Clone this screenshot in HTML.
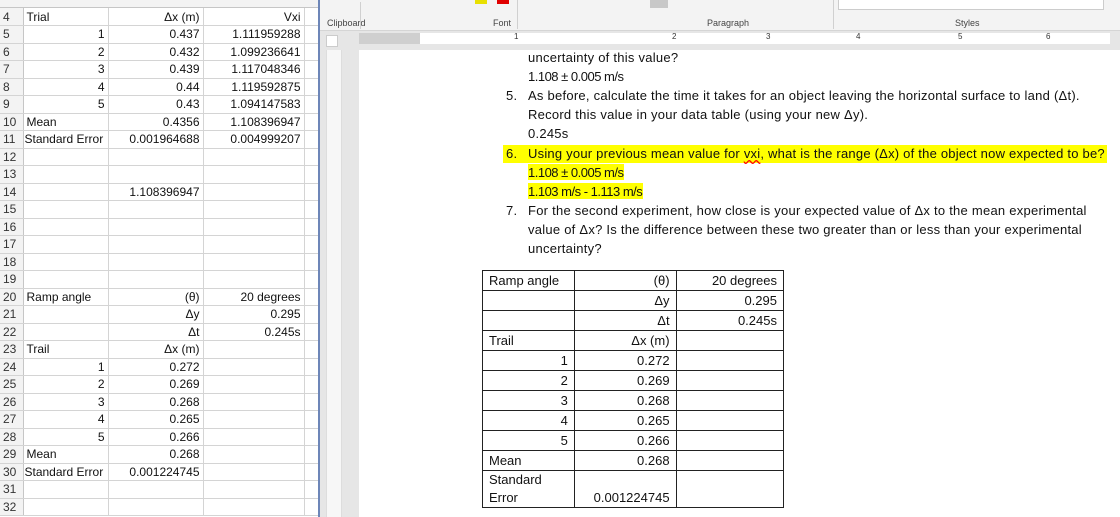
<!DOCTYPE html>
<html><head><meta charset="utf-8"><style>
*{margin:0;padding:0;box-sizing:border-box}
body{width:1120px;height:517px;overflow:hidden;background:#fff;font-family:"Liberation Sans",sans-serif;color:#111;position:relative}
.a{position:absolute;white-space:nowrap}
.xs td{border-right:1px solid #d4d4d4;border-bottom:1px solid #d4d4d4;height:17.5px;font-size:12px;padding:0 3px;line-height:16px;overflow:hidden;white-space:nowrap}
.xs td.h{background:#f3f3f3;color:#333;text-align:left;padding-left:3px;border-right:1px solid #c6c6c6}
.r{text-align:right}
.w{font-size:13px;line-height:19px;letter-spacing:0.25px}
.n{letter-spacing:-0.5px}
.hl{background:#ffff00;padding:1px 1px 0 0}
.t{border-collapse:collapse;font-size:13px}
.t td{border:1px solid #222;height:20px;padding:0 6px;line-height:18px}
</style></head><body>
<div class="a" style="left:0;top:0;width:318px;height:8px;background:#f3f3f3;border-bottom:1px solid #c6c6c6"></div>
<table class="xs a" style="left:0;top:8px;border-collapse:collapse;table-layout:fixed;width:318px">
<colgroup><col style="width:23px"><col style="width:85px"><col style="width:95px"><col style="width:101px"><col style="width:14px"></colgroup>
<tr><td class="h">4</td><td>Trial</td><td class="r">Δx (m)</td><td class="r">Vxi</td><td></td></tr>
<tr><td class="h">5</td><td class="r">1</td><td class="r">0.437</td><td class="r">1.111959288</td><td></td></tr>
<tr><td class="h">6</td><td class="r">2</td><td class="r">0.432</td><td class="r">1.099236641</td><td></td></tr>
<tr><td class="h">7</td><td class="r">3</td><td class="r">0.439</td><td class="r">1.117048346</td><td></td></tr>
<tr><td class="h">8</td><td class="r">4</td><td class="r">0.44</td><td class="r">1.119592875</td><td></td></tr>
<tr><td class="h">9</td><td class="r">5</td><td class="r">0.43</td><td class="r">1.094147583</td><td></td></tr>
<tr><td class="h">10</td><td>Mean</td><td class="r">0.4356</td><td class="r">1.108396947</td><td></td></tr>
<tr><td class="h">11</td><td style="padding:0 1px">Standard Error</td><td class="r">0.001964688</td><td class="r">0.004999207</td><td></td></tr>
<tr><td class="h">12</td><td></td><td></td><td></td><td></td></tr>
<tr><td class="h">13</td><td></td><td></td><td></td><td></td></tr>
<tr><td class="h">14</td><td></td><td class="r">1.108396947</td><td></td><td></td></tr>
<tr><td class="h">15</td><td></td><td></td><td></td><td></td></tr>
<tr><td class="h">16</td><td></td><td></td><td></td><td></td></tr>
<tr><td class="h">17</td><td></td><td></td><td></td><td></td></tr>
<tr><td class="h">18</td><td></td><td></td><td></td><td></td></tr>
<tr><td class="h">19</td><td></td><td></td><td></td><td></td></tr>
<tr><td class="h">20</td><td>Ramp angle</td><td class="r">(θ)</td><td class="r">20 degrees</td><td></td></tr>
<tr><td class="h">21</td><td></td><td class="r">Δy</td><td class="r">0.295</td><td></td></tr>
<tr><td class="h">22</td><td></td><td class="r">Δt</td><td class="r">0.245s</td><td></td></tr>
<tr><td class="h">23</td><td>Trail</td><td class="r">Δx (m)</td><td></td><td></td></tr>
<tr><td class="h">24</td><td class="r">1</td><td class="r">0.272</td><td></td><td></td></tr>
<tr><td class="h">25</td><td class="r">2</td><td class="r">0.269</td><td></td><td></td></tr>
<tr><td class="h">26</td><td class="r">3</td><td class="r">0.268</td><td></td><td></td></tr>
<tr><td class="h">27</td><td class="r">4</td><td class="r">0.265</td><td></td><td></td></tr>
<tr><td class="h">28</td><td class="r">5</td><td class="r">0.266</td><td></td><td></td></tr>
<tr><td class="h">29</td><td>Mean</td><td class="r">0.268</td><td></td><td></td></tr>
<tr><td class="h">30</td><td style="padding:0 1px">Standard Error</td><td class="r">0.001224745</td><td></td><td></td></tr>
<tr><td class="h">31</td><td></td><td></td><td></td><td></td></tr>
<tr><td class="h">32</td><td></td><td></td><td></td><td></td></tr>
</table>
<div class="a" style="left:318px;top:0;width:2px;height:517px;background:#6d86b8"></div>
<!-- word -->
<div class="a" style="left:320px;top:0;width:800px;height:517px;background:#e6e6e6"></div>
<div class="a" style="left:320px;top:0;width:800px;height:31px;background:#f3f3f3;border-bottom:1px solid #d5d5d5"></div>
<div class="a" style="left:327px;top:18px;font-size:9px;color:#444">Clipboard</div>
<div class="a" style="left:493px;top:18px;font-size:9px;color:#444">Font</div>
<div class="a" style="left:707px;top:18px;font-size:9px;color:#444">Paragraph</div>
<div class="a" style="left:955px;top:18px;font-size:9px;color:#444">Styles</div>
<div class="a" style="left:360px;top:2px;width:1px;height:27px;background:#d0d0d0"></div>
<div class="a" style="left:517px;top:0;width:1px;height:29px;background:#d0d0d0"></div>
<div class="a" style="left:833px;top:0;width:1px;height:29px;background:#d0d0d0"></div>
<div class="a" style="left:650px;top:0;width:18px;height:8px;background:#c8c8c8"></div>
<div class="a" style="left:475px;top:0;width:12px;height:4px;background:#e8e000"></div>
<div class="a" style="left:497px;top:0;width:12px;height:4px;background:#e00000"></div>
<div class="a" style="left:838px;top:0;width:266px;height:10px;background:#fff;border:1px solid #ccc;border-top:none"></div>
<!-- ruler -->
<div class="a" style="left:326px;top:35px;width:12px;height:12px;background:#fff;border:1px solid #ccc"></div>
<div class="a" style="left:359px;top:33px;width:61px;height:11px;background:#cfcfcf"></div>
<div class="a" style="left:420px;top:33px;width:690px;height:11px;background:#fff"></div>
<div class="a" style="left:514px;top:32px;font-size:8px;color:#333">1</div>
<div class="a" style="left:672px;top:32px;font-size:8px;color:#333">2</div>
<div class="a" style="left:766px;top:32px;font-size:8px;color:#333">3</div>
<div class="a" style="left:856px;top:32px;font-size:8px;color:#333">4</div>
<div class="a" style="left:958px;top:32px;font-size:8px;color:#333">5</div>
<div class="a" style="left:1046px;top:32px;font-size:8px;color:#333">6</div>
<div class="a" style="left:326px;top:50px;width:16px;height:467px;background:#f7f7f7;border-left:1px solid #ddd;border-right:1px solid #ddd"></div>
<div class="a" style="left:359px;top:50px;width:761px;height:467px;background:#fff"></div>
<!-- text -->
<div class="a w" style="left:528px;top:48px">uncertainty of this value?</div>
<div class="a w n" style="left:528px;top:67px">1.108 ± 0.005 m/s</div>
<div class="a w" style="left:506px;top:86px">5.</div>
<div class="a w" style="left:528px;top:86px">As before, calculate the time it takes for an object leaving the horizontal surface to land (Δt).</div>
<div class="a w" style="left:528px;top:105px">Record this value in your data table (using your new Δy).</div>
<div class="a w" style="left:528px;top:124px">0.245s</div>
<div class="a" style="left:503px;top:145px;width:604px;height:18px;background:#ffff00"></div>
<div class="a w" style="left:506px;top:144px">6.</div>
<div class="a w" style="left:528px;top:144px;letter-spacing:0.22px">Using your previous mean value for <span style="text-decoration:underline wavy red">vxi</span>, what is the range (Δx) of the object now expected to be?</div>
<div class="a w n" style="left:528px;top:163px"><span class="hl">1.108 ± 0.005 m/s</span></div>
<div class="a w n" style="left:528px;top:182px"><span class="hl">1.103 m/s - 1.113 m/s</span></div>
<div class="a w" style="left:506px;top:201px">7.</div>
<div class="a w" style="left:528px;top:201px">For the second experiment, how close is your expected value of Δx to the mean experimental</div>
<div class="a w" style="left:528px;top:220px">value of Δx? Is the difference between these two greater than or less than your experimental</div>
<div class="a w" style="left:528px;top:239px">uncertainty?</div>
<table class="t a" style="left:482px;top:270px;width:302px">
<colgroup><col style="width:92px"><col style="width:102px"><col style="width:108px"></colgroup>
<tr><td>Ramp angle</td><td class="r">(θ)</td><td class="r">20 degrees</td></tr>
<tr><td></td><td class="r">Δy</td><td class="r">0.295</td></tr>
<tr><td></td><td class="r">Δt</td><td class="r">0.245s</td></tr>
<tr><td>Trail</td><td class="r">Δx (m)</td><td></td></tr>
<tr><td class="r">1</td><td class="r">0.272</td><td></td></tr>
<tr><td class="r">2</td><td class="r">0.269</td><td></td></tr>
<tr><td class="r">3</td><td class="r">0.268</td><td></td></tr>
<tr><td class="r">4</td><td class="r">0.265</td><td></td></tr>
<tr><td class="r">5</td><td class="r">0.266</td><td></td></tr>
<tr><td>Mean</td><td class="r">0.268</td><td></td></tr>
<tr><td style="height:37px">Standard<br>Error</td><td class="r" style="vertical-align:bottom">0.001224745</td><td></td></tr>
</table>
</body></html>
